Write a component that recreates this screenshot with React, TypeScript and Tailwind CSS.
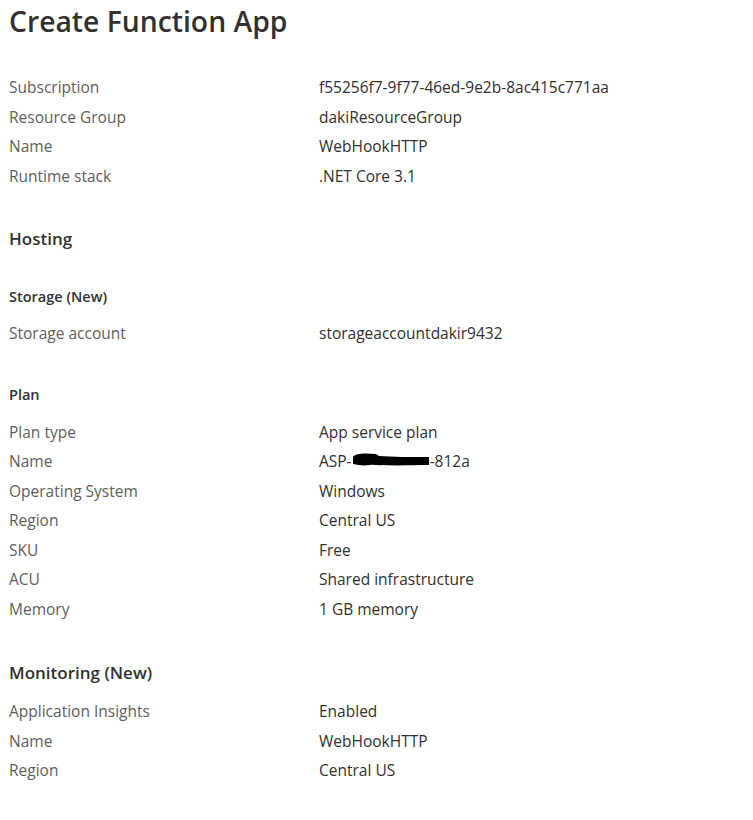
import React from "react";

const font = { fontFamily: '"Open Sans", "Noto Sans", sans-serif' };

function Row({ label, value }: { label: string; value: React.ReactNode }) {
  return (
    <div className="flex h-[29.5px] items-center text-[15.5px]">
      <div className="w-[310px] text-[#605e5c]">{label}</div>
      <div className="text-[#323130]">{value}</div>
    </div>
  );
}

function Redacted() {
  return (
    <svg width="78" height="14" viewBox="0 0 78 14" className="inline-block align-middle -mt-[6px]">
      <path
        d="M1 4 C3 0 14 0 24 1 L27 3 C40 4 60 4 77 4 L77 12 C60 12 45 13 30 12 C26 13 22 11 18 12 C12 13 6 12 1 11 Z"
        fill="#000"
      />
    </svg>
  );
}

export default function App() {
  return (
    <div className="min-h-[820px] w-[753px] bg-white pl-[9px]" style={font}>
      <h1 className="h-[42px] text-[28.3px] font-semibold leading-[42px] text-[#323130]">Create Function App</h1>
      <div className="mt-[31px]">
        <Row label="Subscription" value="f55256f7-9f77-46ed-9e2b-8ac415c771aa" />
        <Row label="Resource Group" value="dakiResourceGroup" />
        <Row label="Name" value="WebHookHTTP" />
        <Row label="Runtime stack" value=".NET Core 3.1" />
      </div>
      <div className="mt-[36px] text-[17px] font-semibold leading-[24px] text-[#323130]">Hosting</div>
      <div className="mt-[36px] text-[14.5px] font-semibold leading-[20px] text-[#323130]">Storage (New)</div>
      <div className="mt-[12px]">
        <Row label="Storage account" value="storageaccountdakir9432" />
      </div>
      <div className="mt-[36px] text-[14.5px] font-semibold leading-[20px] text-[#323130]">Plan</div>
      <div className="mt-[13px]">
        <Row label="Plan type" value="App service plan" />
        <Row
          label="Name"
          value={
            <span className="whitespace-nowrap">
              ASP-
              <Redacted />
              -812a
            </span>
          }
        />
        <Row label="Operating System" value="Windows" />
        <Row label="Region" value="Central US" />
        <Row label="SKU" value="Free" />
        <Row label="ACU" value="Shared infrastructure" />
        <Row label="Memory" value="1 GB memory" />
      </div>
      <div className="mt-[37px] text-[17px] font-semibold leading-[24px] text-[#323130]">Monitoring (New)</div>
      <div className="mt-[12px]">
        <Row label="Application Insights" value="Enabled" />
        <Row label="Name" value="WebHookHTTP" />
        <Row label="Region" value="Central US" />
      </div>
    </div>
  );
}
